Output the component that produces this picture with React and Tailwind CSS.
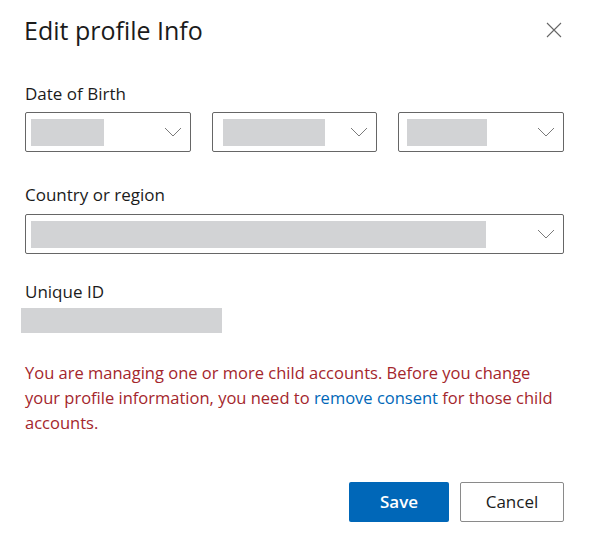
import React from "react";

const Chevron = () => (
  <svg width="18" height="10" viewBox="0 0 18 10" fill="none" className="shrink-0">
    <path d="M1 1l8 8 8-8" stroke="#7a7a7a" strokeWidth="1" />
  </svg>
);

const Select = ({ fill }) => (
  <div className="h-[40px] border border-[#666] rounded-[2px] flex items-center justify-between pl-[5px] pr-[8px]">
    <div className={`h-[27px] bg-[#d2d3d5] ${fill}`} />
    <Chevron />
  </div>
);

export default function App() {
  return (
    <div
      className="w-[593px] h-[548px] bg-white text-[#1b1b1b] pl-[25px] pr-[29px] pt-[14px]"
      style={{ fontFamily: '"Open Sans", "Noto Sans", sans-serif' }}
    >
      {/* header */}
      <div className="flex items-center justify-between">
        <h1 className="text-[25px] leading-[32px] font-normal -ml-[1px]">Edit profile Info</h1>
        <button className="w-[18px] h-[18px] flex items-center justify-center mr-[1px]">
          <svg width="16" height="16" viewBox="0 0 16 16" fill="none">
            <path d="M1 1l14 14M15 1L1 15" stroke="#666" strokeWidth="1.1" />
          </svg>
        </button>
      </div>

      {/* date of birth */}
      <div className="mt-[37px] text-[17px] leading-[22px]">Date of Birth</div>
      <div className="mt-[7px] grid grid-cols-3 gap-[21px]">
        <Select fill="w-[73px]" />
        <Select fill="w-[102px] ml-[5px]" />
        <Select fill="w-[80px] ml-[3px]" />
      </div>

      {/* country */}
      <div className="mt-[32px] text-[17px] leading-[22px]">Country or region</div>
      <div className="mt-[8px]">
        <Select fill="w-[455px]" />
      </div>

      {/* unique id */}
      <div className="mt-[27px] text-[17px] leading-[22px]">Unique ID</div>
      <div className="mt-[5px] -ml-[4px] h-[25px] w-[201px] bg-[#d2d3d5]" />

      {/* warning */}
      <p className="mt-[27px] text-[16.5px] leading-[25px] text-[#a4262c]">
        You are managing one or more child accounts. Before you change
        <br />
        your profile information, you need to{" "}
        <a href="#" className="text-[#0067b8]">remove consent</a> for those child
        accounts.
      </p>

      {/* actions */}
      <div className="mt-[47px] flex justify-end gap-[11px]">
        <button className="w-[100px] h-[40px] bg-[#0067b8] text-white text-[17px] font-semibold rounded-[2px]">
          Save
        </button>
        <button className="w-[104px] h-[40px] border border-[#8a8a8a] text-[#1b1b1b] text-[17px] rounded-[2px]">
          Cancel
        </button>
      </div>
    </div>
  );
}
